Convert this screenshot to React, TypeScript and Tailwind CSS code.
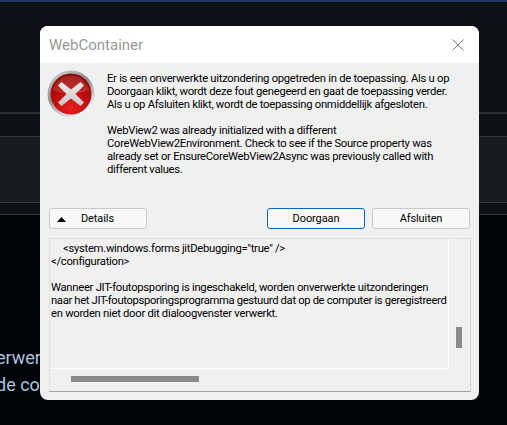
import React from 'react';

const uiFont = "font-['Roboto','Liberation_Sans',sans-serif]";

const ErrorIcon = () => (
  <svg width="50" height="50" viewBox="0 0 50 50" className="shrink-0">
    <defs>
      <linearGradient id="ring" x1="0" y1="0" x2="0.6" y2="1">
        <stop offset="0" stopColor="#d8d8d8" />
        <stop offset="0.5" stopColor="#8e8e8e" />
        <stop offset="1" stopColor="#f4f4f4" />
      </linearGradient>
      <radialGradient id="red" cx="0.5" cy="0.85" r="0.8">
        <stop offset="0" stopColor="#e82020" />
        <stop offset="0.55" stopColor="#bd0c0c" />
        <stop offset="1" stopColor="#930808" />
      </radialGradient>
      <linearGradient id="cross" x1="0" y1="0" x2="0" y2="1">
        <stop offset="0" stopColor="#eeeaea" />
        <stop offset="1" stopColor="#cfc6c6" />
      </linearGradient>
    </defs>
    <circle cx="25" cy="25" r="23.5" fill="url(#ring)" />
    <circle cx="25" cy="25" r="20.5" fill="url(#red)" />
    <path d="M7 21a18.5 18.5 0 0 1 36 0c-10 5-26 5-36 0z" fill="#fff" opacity="0.12" />
    <path
      d="M15.500 13 25 20.500 34.500 13l3.500 3.500L29.500 25l8.500 8.500-3.500 3.500L25 29.500 15.500 37 12 33.500 20.500 25 12 16.500z"
      fill="url(#cross)"
    />
  </svg>
);

const DialogButton = ({ children, primary }: { children: React.ReactNode; primary?: boolean }) => (
  <button
    className={
      primary
        ? 'w-[98px] h-[21px] pt-px rounded-[3px] border border-[#0067c0] bg-[#f8f8f8] text-[11px] tracking-[-0.1px] text-black'
        : 'w-[98px] h-[21px] pt-px rounded-[3px] border border-[#c8c8c8] bg-[#f8f8f8] text-[11px] tracking-[-0.1px] text-black'
    }
  >
    {children}
  </button>
);

export default function App() {
  return (
    <div className={`relative w-[507px] h-[425px] overflow-hidden bg-[#010409] ${uiFont}`}>
      {/* page behind the dialog */}
      <div className="h-[2px] bg-[#1f3a63]" />
      <div className="h-[110px] bg-[#0d1117]" />
      <div className="h-[2px] bg-[#2a2f36]" />
      <div className="h-[22px] bg-[#0d1117]" />
      <div className="h-px bg-[#30363d]" />
      <div className="h-[65px] bg-[#161b22]" />
      <div className="h-px bg-[#30363d]" />
      <div className="h-[11px] bg-[#0d1117]" />
      <div className="h-px bg-[#30363d]" />
      <div className="pt-[129px] -ml-[4px] text-[18px] leading-[27px] text-[#a9c4de]">
        <div>erwer</div>
        <div>de co</div>
      </div>

      {/* dialog */}
      <div className="absolute left-[40px] top-[26px] w-[439px] h-[374px] rounded-lg bg-[#f0f0f0] overflow-hidden">
        <div className="h-[37px] bg-white flex items-center justify-between pl-[9px] pr-[15px]">
          <span className="text-[15px] text-[#999999] translate-y-px">WebContainer</span>
          <svg width="12" height="12" viewBox="0 0 12 12">
            <path d="M0.500 0.500 11.500 11.500M11.500 0.500 0.500 11.500" stroke="#777777" strokeWidth="1" fill="none" />
          </svg>
        </div>

        <div className="flex h-[145px] pl-[6px] pt-[6px]">
          <ErrorIcon />
          <div className="ml-[11px] pt-[3px] text-[11.25px] leading-[13px] tracking-[-0.28px] text-black">
            <p className="whitespace-nowrap">Er is een onverwerkte uitzondering opgetreden in de toepassing. Als u op</p>
            <p className="whitespace-nowrap">Doorgaan klikt, wordt deze fout genegeerd en gaat de toepassing verder.</p>
            <p className="whitespace-nowrap">Als u op Afsluiten klikt, wordt de toepassing onmiddellijk afgesloten.</p>
            <p className="mt-[13px] whitespace-nowrap">WebView2 was already initialized with a different</p>
            <p className="whitespace-nowrap">CoreWebView2Environment. Check to see if the Source property was</p>
            <p className="whitespace-nowrap">already set or EnsureCoreWebView2Async was previously called with</p>
            <p className="whitespace-nowrap">different values.</p>
          </div>
        </div>

        <div className="flex pl-[9px] pr-[9px]">
          <button className="w-[98px] h-[21px] pt-px rounded-[3px] border border-[#c8c8c8] bg-[#f8f8f8] text-[11px] tracking-[-0.1px] text-black flex items-center">
            <svg width="9" height="5" viewBox="0 0 9 5" className="ml-[7px] mr-[15px]">
              <path d="M4.500 0 9 5H0z" fill="#000" />
            </svg>
            Details
          </button>
          <div className="ml-auto flex gap-[7px]">
            <DialogButton primary>Doorgaan</DialogButton>
            <DialogButton>Afsluiten</DialogButton>
          </div>
        </div>

        <div className="ml-[9px] mt-[9px] w-[422px] h-[154px] border-t border-l border-t-[#e2e2e2] border-l-[#e2e2e2] border-r border-r-[#d4d4d4] border-b border-b-[#a0a0a0] flex">
          <div className="w-[399px] flex flex-col">
            <div className="h-[130px] border-r border-b border-white pl-[1px] pt-[3px] text-[11.25px] leading-[13px] tracking-[-0.28px] text-black overflow-hidden">
              <p className="ml-[12px] whitespace-nowrap">{'<system.windows.forms jitDebugging="true" />'}</p>
              <p>{'</configuration>'}</p>
              <p className="mt-[13px] whitespace-nowrap">Wanneer JIT-foutopsporing is ingeschakeld, worden onverwerkte uitzonderingen</p>
              <p className="whitespace-nowrap tracking-[-0.35px]">naar het JIT-foutopsporingsprogramma gestuurd dat op de computer is geregistreerd</p>
              <p className="whitespace-nowrap">en worden niet door dit dialoogvenster verwerkt.</p>
            </div>
            <div className="ml-[21px] mt-[7px] w-[128px] h-[6px] bg-[#8a8a8a]" />
          </div>
          <div className="ml-[7px] mt-[88px] w-[6px] h-[21px] bg-[#8a8a8a]" />
        </div>
      </div>
    </div>
  );
}
